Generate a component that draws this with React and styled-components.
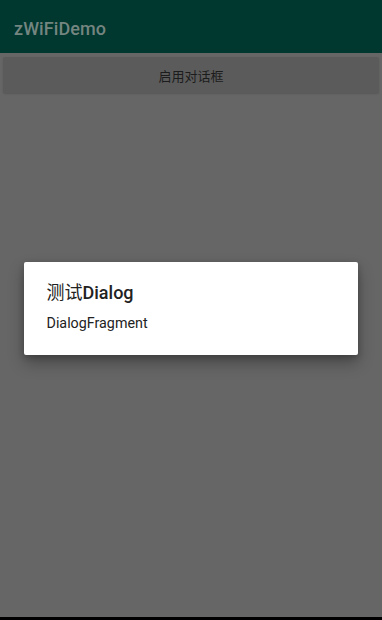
import React from "react";
import styled, { createGlobalStyle } from "styled-components";

const Global = createGlobalStyle`
  html, body { margin: 0; padding: 0; }
  body { background: #000; font-family: Roboto, "Noto Sans CJK SC", sans-serif; }
  * { box-sizing: border-box; }
`;

const Screen = styled.div`
  position: relative;
  width: 382px;
  height: 620px;
  display: flex;
  flex-direction: column;
  background: #000;
  overflow: hidden;
`;

const Window = styled.div`
  position: relative;
  height: 617px;
  display: flex;
  flex-direction: column;
  background: #666666;
`;

const AppBar = styled.header`
  height: 53px;
  flex: none;
  background: #00372f;
  display: flex;
  align-items: center;
  padding-left: 14px;
  padding-top: 3px;
`;

const AppTitle = styled.h1`
  margin: 0;
  font-family: Roboto, sans-serif;
  font-weight: 500;
  font-size: 18px;
  color: #748580;
  letter-spacing: 0.1px;
`;

const Content = styled.main`
  flex: 1;
  padding: 4px 3px;
`;

const Button = styled.div`
  height: 36px;
  background: #5b5b5b;
  border-radius: 2px;
  display: flex;
  align-items: center;
  justify-content: center;
  font-family: Roboto, "Noto Sans CJK SC", sans-serif;
  font-size: 13px;
  color: #1c1c1c;
  box-shadow: 0 1px 2px rgba(0, 0, 0, 0.15);
`;

const Overlay = styled.div`
  position: absolute;
  inset: 0;
  display: flex;
  align-items: center;
  justify-content: center;
`;

const Dialog = styled.div`
  width: 334px;
  height: 93px;
  margin-left: -1px;
  background: #ffffff;
  border-radius: 2px;
  box-shadow: 0 8px 16px rgba(0, 0, 0, 0.3), 0 2px 6px rgba(0, 0, 0, 0.2);
  padding: 18px 23px 0;
  display: flex;
  flex-direction: column;
`;

const DialogTitle = styled.div`
  font-family: Roboto, "Noto Sans CJK SC", sans-serif;
  font-size: 18px;
  line-height: 26px;
  color: #222;
`;

const Strong = styled.span`
  font-weight: 500;
`;

const DialogBody = styled.div`
  margin-top: 7px;
  font-family: Roboto, sans-serif;
  font-size: 14.3px;
  line-height: 20px;
  color: #222;
`;

export default function App() {
  return (
    <>
      <Global />
      <Screen>
        <Window>
          <AppBar>
            <AppTitle>zWiFiDemo</AppTitle>
          </AppBar>
          <Content>
            <Button>启用对话框</Button>
          </Content>
          <Overlay>
            <Dialog>
              <DialogTitle>
                测试<Strong>Dialog</Strong>
              </DialogTitle>
              <DialogBody>DialogFragment</DialogBody>
            </Dialog>
          </Overlay>
        </Window>
      </Screen>
    </>
  );
}
